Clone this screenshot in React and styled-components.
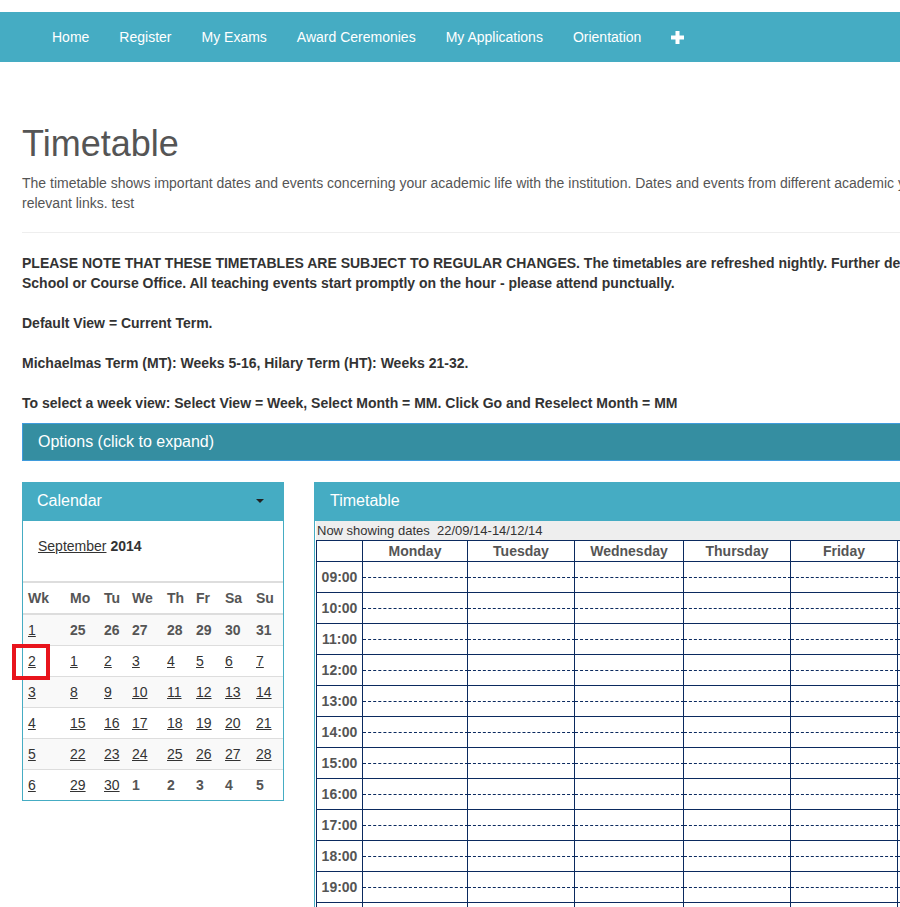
import React from 'react';
import styled, { createGlobalStyle } from 'styled-components';

const GlobalStyle = createGlobalStyle`
  html, body {
    margin: 0;
    padding: 0;
    overflow: hidden;
    background: #fff;
  }
  body {
    font-family: "Liberation Sans", Arial, Helvetica, sans-serif;
    font-size: 14px;
    line-height: 20px;
    color: #333;
  }
  * { box-sizing: border-box; }
`;

const NavBar = styled.nav`
  margin-top: 12px;
  height: 50px;
  width: 1200px;
  background: #45acc3;
`;

const NavList = styled.ul`
  display: flex;
  align-items: center;
  margin: 0;
  padding: 0 0 0 37px;
  list-style: none;
  height: 100%;
`;

const NavItem = styled.li`
  padding: 0 15px;
  color: #fff;
  font-size: 14px;
  line-height: 50px;
  display: flex;
  align-items: center;
`;

const Page = styled.div`
  width: 1140px;
  margin-left: 22px;
`;

const Title = styled.h1`
  margin: 62px 0 9px;
  font-size: 36px;
  line-height: 1.1;
  font-weight: 400;
  color: #555;
`;

const Intro = styled.p`
  margin: 0;
  color: #555;
`;

const Rule = styled.hr`
  margin: 19px 0 20px;
  border: 0;
  border-top: 1px solid #eee;
`;

const Note = styled.p`
  margin: 0 0 ${({ last }) => (last ? '10px' : '20px')};
  font-weight: 700;
  color: #333;
`;

const OptionsBar = styled.div`
  height: 38px;
  padding: 0 15px;
  background: #358ea1;
  border: 1px solid #3f9bdc;
  color: #fff;
  font-size: 16px;
  line-height: 36px;
  margin-bottom: 21px;
`;

const Columns = styled.div`
  display: grid;
  grid-template-columns: 262px 848px;
  column-gap: 30px;
  align-items: start;
`;

const Panel = styled.section`
  border: 1px solid #45acc3;
  background: #fff;
`;

const PanelHeading = styled.div`
  display: flex;
  align-items: center;
  justify-content: space-between;
  height: 39px;
  margin: -1px -1px 0;
  padding: 0 ${({ wide }) => (wide ? '16px' : '15px')};
  background: #45acc3;
  color: #fff;
  font-size: 16px;
  line-height: 18px;
`;

const Caret = styled.span`
  width: 0;
  height: 0;
  margin-right: 5px;
  border-left: 4px solid transparent;
  border-right: 4px solid transparent;
  border-top: 4px solid #222;
`;

const MonthCaption = styled.div`
  padding: 15px 15px 25px;
  color: #333;
`;

const Link = styled.a`
  color: #333;
  text-decoration: underline;
`;

const CalTable = styled.table`
  width: 100%;
  border-collapse: collapse;
  border-top: 2px solid #ddd;
`;

const CalHead = styled.th`
  padding: 5px 0 5px 5px;
  text-align: left;
  font-weight: 700;
  color: #555;
  border-bottom: 2px solid #ddd;
  width: ${({ w }) => w}px;
`;

const CalRow = styled.tr`
  background: ${({ striped }) => (striped ? '#f9f9f9' : '#fff')};
  border-top: 1px solid #ddd;
  &:first-child { border-top: 0; }
`;

const CalCell = styled.td`
  position: relative;
  padding: 5px 0 5px 5px;
  height: 30px;
  font-weight: ${({ outside }) => (outside ? 700 : 400)};
  color: #555;
`;

const Marker = styled.span`
  position: absolute;
  left: -11px;
  top: -2px;
  width: 38px;
  height: 36px;
  border: 4px solid #e8141c;
  pointer-events: none;
`;

const DateStrip = styled.div`
  margin-left: 1px;
  height: 19px;
  padding-left: 1px;
  background: #eee;
  font-size: 13px;
  line-height: 19px;
  color: #333;
  white-space: pre;
`;

const Grid = styled.div`
  margin-left: 1px;
  border-top: 1px solid #0b2a5f;
  border-left: 1px solid #0b2a5f;
`;

const GridRow = styled.div`
  display: grid;
  grid-template-columns: 46px 105px 107px 109px 107px 107px 1fr 1fr;
  height: ${({ h }) => h}px;
  border-bottom: 1px solid #0b2a5f;
`;

const DayHead = styled.div`
  border-right: 1px solid #0b2a5f;
  text-align: center;
  font-weight: 700;
  color: #555;
  line-height: 20px;
`;

const TimeCell = styled.div`
  border-right: 1px solid #0b2a5f;
  display: flex;
  align-items: center;
  justify-content: center;
  font-weight: 700;
  color: #555;
  padding-top: 1px;
`;

const SlotCell = styled.div`
  position: relative;
  border-right: 1px solid #0b2a5f;
  &::after {
    content: '';
    position: absolute;
    left: 0;
    right: -1px;
    top: 15px;
    border-top: 1px dashed #0b2a5f;
  }
`;

const navItems = ['Home', 'Register', 'My Exams', 'Award Ceremonies', 'My Applications', 'Orientation'];
const days = ['Monday', 'Tuesday', 'Wednesday', 'Thursday', 'Friday', 'Saturday', 'Sunday'];
const hours = ['09:00', '10:00', '11:00', '12:00', '13:00', '14:00', '15:00', '16:00', '17:00', '18:00', '19:00', '20:00', '21:00'];

const calHeads = [
  ['Wk', 42], ['Mo', 34], ['Tu', 28], ['We', 35], ['Th', 29], ['Fr', 29], ['Sa', 31], ['Su', 32],
];

// each day: [label, outsideMonth]
const weeks = [
  { wk: 1, days: [[25, 1], [26, 1], [27, 1], [28, 1], [29, 1], [30, 1], [31, 1]] },
  { wk: 2, days: [1, 2, 3, 4, 5, 6, 7].map((d) => [d, 0]) },
  { wk: 3, days: [8, 9, 10, 11, 12, 13, 14].map((d) => [d, 0]) },
  { wk: 4, days: [15, 16, 17, 18, 19, 20, 21].map((d) => [d, 0]) },
  { wk: 5, days: [22, 23, 24, 25, 26, 27, 28].map((d) => [d, 0]) },
  { wk: 6, days: [[29, 0], [30, 0], [1, 1], [2, 1], [3, 1], [4, 1], [5, 1]] },
];

function PlusIcon() {
  return (
    <svg width="13" height="13" viewBox="0 0 13 13">
      <path d="M4.5 0h4v4.5H13v4H8.5V13h-4V8.5H0v-4h4.5z" fill="#fff" />
    </svg>
  );
}

function Calendar() {
  return (
    <Panel>
      <PanelHeading>
        <span>Calendar</span>
        <Caret />
      </PanelHeading>
      <MonthCaption>
        <Link>September</Link> <b>2014</b>
      </MonthCaption>
      <CalTable>
        <thead>
          <tr>
            {calHeads.map(([h, w]) => (
              <CalHead key={h} w={w}>{h}</CalHead>
            ))}
          </tr>
        </thead>
        <tbody>
          {weeks.map((week, i) => (
            <CalRow key={week.wk} striped={i % 2 === 0}>
              <CalCell>
                <Link>{week.wk}</Link>
                {week.wk === 2 && <Marker />}
              </CalCell>
              {week.days.map(([d, out], j) => (
                <CalCell key={j} outside={out}>
                  {out ? d : <Link>{d}</Link>}
                </CalCell>
              ))}
            </CalRow>
          ))}
        </tbody>
      </CalTable>
    </Panel>
  );
}

function Timetable() {
  return (
    <Panel>
      <PanelHeading wide>
        <span>Timetable</span>
      </PanelHeading>
      <DateStrip>{'Now showing dates  22/09/14-14/12/14'}</DateStrip>
      <Grid>
        <GridRow h={21}>
          <DayHead />
          {days.map((d) => (
            <DayHead key={d}>{d}</DayHead>
          ))}
        </GridRow>
        {hours.map((h) => (
          <GridRow key={h} h={31}>
            <TimeCell>{h}</TimeCell>
            {days.map((d) => (
              <SlotCell key={d} />
            ))}
          </GridRow>
        ))}
      </Grid>
    </Panel>
  );
}

export default function App() {
  return (
    <>
      <GlobalStyle />
      <NavBar>
        <NavList>
          {navItems.map((item) => (
            <NavItem key={item}>{item}</NavItem>
          ))}
          <NavItem>
            <PlusIcon />
          </NavItem>
        </NavList>
      </NavBar>
      <Page>
        <Title>Timetable</Title>
        <Intro>
          The timetable shows important dates and events concerning your academic life with the institution. Dates and events from different academic years can be viewed using the
          <br />
          relevant links. test
        </Intro>
        <Rule />
        <Note>
          PLEASE NOTE THAT THESE TIMETABLES ARE SUBJECT TO REGULAR CHANGES. The timetables are refreshed nightly. Further details can be obtained from your
          <br />
          School or Course Office. All teaching events start promptly on the hour - please attend punctually.
        </Note>
        <Note>Default View = Current Term.</Note>
        <Note>Michaelmas Term (MT): Weeks 5-16, Hilary Term (HT): Weeks 21-32.</Note>
        <Note last>To select a week view: Select View = Week, Select Month = MM. Click Go and Reselect Month = MM</Note>
        <OptionsBar>Options (click to expand)</OptionsBar>
        <Columns>
          <Calendar />
          <Timetable />
        </Columns>
      </Page>
    </>
  );
}
